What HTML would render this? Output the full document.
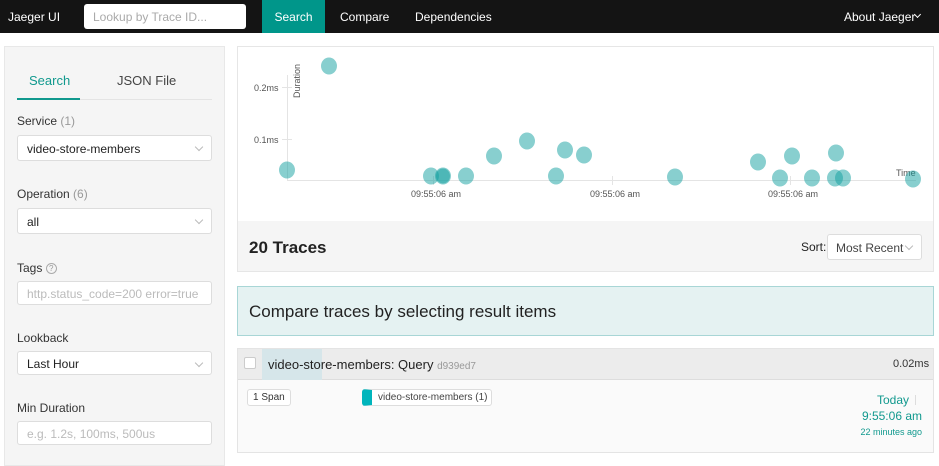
<!DOCTYPE html>
<html><head><style>
*{box-sizing:border-box;margin:0;padding:0}
body{width:939px;height:456px;overflow:hidden;background:#fff;font-family:"Liberation Sans",sans-serif;position:relative;color:#222;white-space:nowrap}
.a{position:absolute}
.nav{left:0;top:0;width:939px;height:33px;background:#141414;color:#fff;font-size:12px}
.lbl{font-size:12px;color:#333}
.lbl span{color:#999}
.sel{position:absolute;left:17px;width:195px;height:26px;background:#fff;border:1px solid #ddd;border-radius:3px;font-size:12px;padding:6px 9px;color:#222;overflow:hidden}
.sel.ph{color:#bbb}
.chev{position:absolute;right:9px;top:8px;width:6px;height:6px;border-right:1px solid #bbb;border-bottom:1px solid #bbb;transform:rotate(45deg)}
</style></head><body>
<div class="a nav">
 <div class="a" style="left:8px;top:10px">Jaeger UI</div>
 <div class="a" style="left:84px;top:4px;width:162px;height:25px;background:#fff;border-radius:3px;color:#aaa;padding:6px 9px;font-size:12px">Lookup by Trace ID...</div>
 <div class="a" style="left:262px;top:0;width:63px;height:33px;background:#00968a;text-align:center;padding-top:10px">Search</div>
 <div class="a" style="left:340px;top:10px">Compare</div>
 <div class="a" style="left:415px;top:10px">Dependencies</div>
 <div class="a" style="left:844px;top:10px">About Jaeger</div>
 <div class="a" style="left:915px;top:12px;width:5px;height:5px;border-right:1px solid #fff;border-bottom:1px solid #fff;transform:rotate(45deg)"></div>
</div>
<div class="a" style="left:4px;top:46px;width:221px;height:420px;background:#f5f5f5;border:1px solid #e8e8e8">
</div>
<div class="a" style="left:29px;top:73px;font-size:13px;color:#11998e">Search</div>
<div class="a" style="left:117px;top:73px;font-size:13px;color:#444">JSON File</div>
<div class="a" style="left:17px;top:99px;width:195px;height:1px;background:#e4e4e4"></div>
<div class="a" style="left:17px;top:98px;width:63px;height:2px;background:#11998e"></div>
<div class="a lbl" style="left:17px;top:114px">Service <span>(1)</span></div>
<div class="sel" style="top:135px">video-store-members<div class="chev"></div></div>
<div class="a lbl" style="left:17px;top:187px">Operation <span>(6)</span></div>
<div class="sel" style="top:208px">all<div class="chev"></div></div>
<div class="a lbl" style="left:17px;top:261px">Tags <span style="display:inline-block;width:11px;height:11px;border:1px solid #aaa;border-radius:50%;font-size:8px;text-align:center;line-height:9px;vertical-align:middle">?</span></div>
<div class="sel ph" style="top:281px;height:24px;padding:5px 9px">http.status_code=200 error=true</div>
<div class="a lbl" style="left:17px;top:331px">Lookback</div>
<div class="sel" style="top:351px;height:24px;padding:5px 9px">Last Hour<div class="chev"></div></div>
<div class="a lbl" style="left:17px;top:401px">Min Duration</div>
<div class="sel ph" style="top:421px;height:24px;padding:5px 9px">e.g. 1.2s, 100ms, 500us</div>

<div class="a" style="left:237px;top:46px;width:697px;height:226px;border:1px solid #e6e6e6;background:#f5f5f5"></div>
<div class="a" style="left:238px;top:47px;width:695px;height:174px;background:#fff"></div>
<svg class="a" style="left:0;top:0" width="939" height="230">
 <g stroke="#e4e4e4" stroke-width="1"><line x1="287.5" y1="75" x2="287.5" y2="180"/><line x1="287" y1="180.5" x2="916" y2="180.5"/>
 <line x1="282" y1="87.5" x2="292" y2="87.5"/><line x1="282" y1="139.5" x2="292" y2="139.5"/>
 <line x1="433.5" y1="176" x2="433.5" y2="185"/><line x1="612.5" y1="176" x2="612.5" y2="185"/><line x1="790.5" y1="176" x2="790.5" y2="185"/></g>
 <g font-family="Liberation Sans" font-size="9" fill="#555">
 <text x="254" y="91">0.2ms</text><text x="254" y="143">0.1ms</text>
 <text x="411" y="197">09:55:06 am</text><text x="590" y="197">09:55:06 am</text><text x="768" y="197">09:55:06 am</text>
 <text x="896" y="176">Time</text>
 <text transform="translate(300,98) rotate(-90)">Duration</text></g>
 <g fill="#12a0a0" fill-opacity="0.5">
 <ellipse cx="287" cy="170" rx="8" ry="8.5"/><ellipse cx="329" cy="66" rx="8" ry="8.5"/><ellipse cx="431" cy="176" rx="8" ry="8.5"/><ellipse cx="443" cy="176" rx="8" ry="8.5"/><ellipse cx="443" cy="176" rx="7" ry="7.5"/><ellipse cx="466" cy="176" rx="8" ry="8.5"/><ellipse cx="494" cy="156" rx="8" ry="8.5"/><ellipse cx="527" cy="141" rx="8" ry="8.5"/><ellipse cx="556" cy="176" rx="8" ry="8.5"/><ellipse cx="565" cy="150" rx="8" ry="8.5"/><ellipse cx="584" cy="155" rx="8" ry="8.5"/><ellipse cx="675" cy="177" rx="8" ry="8.5"/><ellipse cx="758" cy="162" rx="8" ry="8.5"/><ellipse cx="780" cy="178" rx="8" ry="8.5"/><ellipse cx="792" cy="156" rx="8" ry="8.5"/><ellipse cx="812" cy="178" rx="8" ry="8.5"/><ellipse cx="836" cy="153" rx="8" ry="8.5"/><ellipse cx="835" cy="178" rx="8" ry="8.5"/><ellipse cx="843" cy="178" rx="8" ry="8.5"/><ellipse cx="913" cy="179" rx="8" ry="8.5"/>
 </g>
</svg>
<div class="a" style="left:249px;top:238px;font-size:17px;font-weight:bold;color:#222">20 Traces</div>
<div class="a" style="left:801px;top:240px;font-size:12px">Sort:</div>
<div class="a" style="left:827px;top:234px;width:95px;height:26px;background:#fff;border:1px solid #ddd;border-radius:3px;font-size:12px;padding:6px 8px;color:#444">Most Recent<div class="chev"></div></div>

<div class="a" style="left:237px;top:286px;width:697px;height:50px;background:#e5f2f2;border:1px solid #a8d6d6"></div>
<div class="a" style="left:249px;top:302px;font-size:17px;color:#222">Compare traces by selecting result items</div>

<div class="a" style="left:237px;top:348px;width:697px;height:105px;border:1px solid #e4e4e4;background:#fafafa"></div>
<div class="a" style="left:238px;top:349px;width:695px;height:31px;background:#ececec;border-bottom:1px solid #ddd"></div>
<div class="a" style="left:262px;top:349px;width:60px;height:31px;background:#d6e6ea"></div>
<div class="a" style="left:244px;top:357px;width:12px;height:12px;background:#fff;border:1px solid #ccc;border-radius:2px"></div>
<div class="a" style="left:268px;top:357px;font-size:13px;color:#222">video-store-members: Query <span style="font-size:10px;color:#999">d939ed7</span></div>
<div class="a" style="left:893px;top:358px;font-size:11px;color:#333">0.02ms</div>
<div class="a" style="left:247px;top:389px;height:17px;padding:2px 5px;border:1px solid #ddd;border-radius:3px;background:#fff;font-size:10px;color:#333">1 Span</div>
<div class="a" style="left:362px;top:389px;width:130px;height:17px;border:1px solid #ddd;border-left:10px solid #00b5bc;border-radius:3px;background:#fff;font-size:10px;color:#444;padding:2px 6px">video-store-members (1)</div>
<div class="a" style="left:800px;top:393px;width:109px;text-align:right;font-size:12px;color:#11998e">Today</div>
<div class="a" style="left:915px;top:395px;width:1px;height:10px;background:#ddd"></div>
<div class="a" style="left:800px;top:409px;width:122px;text-align:right;font-size:12px;color:#11998e">9:55:06 am</div>
<div class="a" style="left:800px;top:427px;width:122px;text-align:right;font-size:9px;color:#11998e">22 minutes ago</div>
</body></html>
